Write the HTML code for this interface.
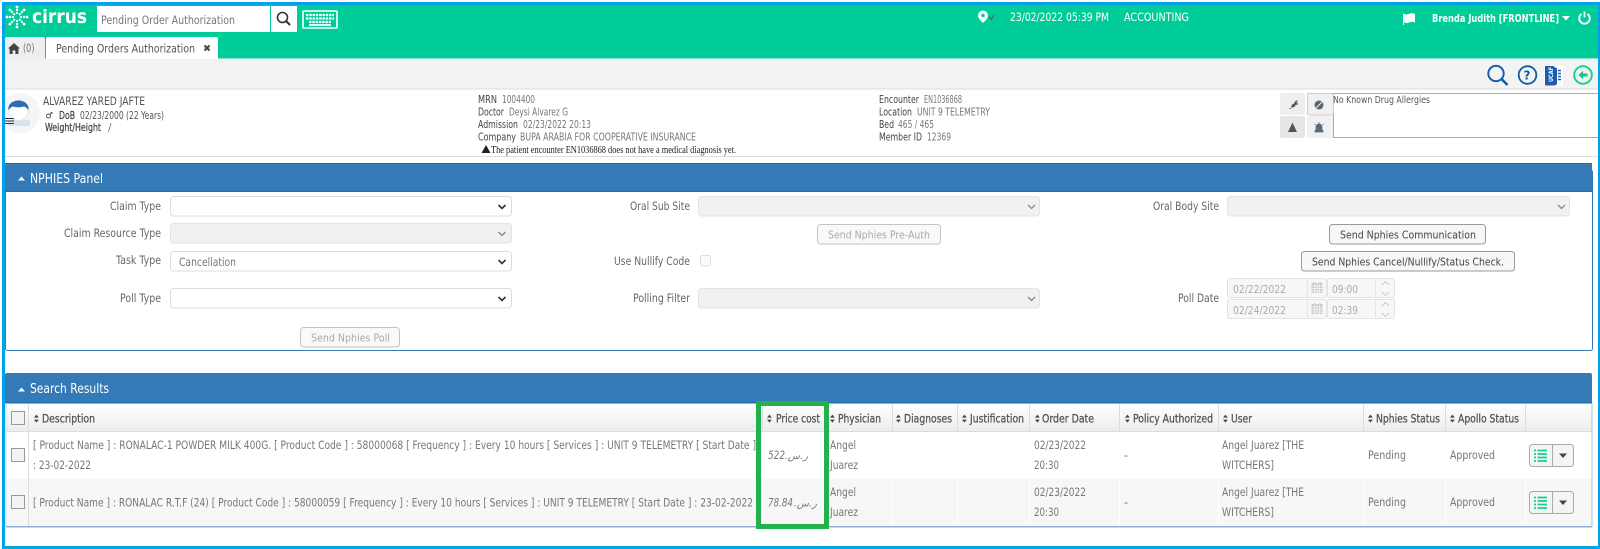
<!DOCTYPE html>
<html lang="en">
<head>
<meta charset="utf-8">
<title>Pending Orders Authorization</title>
<style>
html,body{margin:0;padding:0;background:#fff;width:1600px;height:549px;overflow:hidden}
svg{display:block}
text{font-family:"DejaVu Sans","Liberation Sans",sans-serif;font-size:11.5px;fill:#777;white-space:pre}
.h{fill:#555;font-size:11.5px;stroke:#555;stroke-width:.3}
.l{fill:#666;font-size:11.5px}
.d{fill:#444;font-size:10.5px}
.v{fill:#777;font-size:10.5px}
.w{fill:#fff;font-size:11.5px}
.t{fill:#fff;font-size:13px}
.b{fill:#444;font-size:11px}
.bd{fill:#aaa;font-size:11px}
.c{fill:#777;font-size:11.5px}
.i{fill:#aaa;font-size:11px}
.sel{fill:#fff;stroke:#ddd;stroke-width:1}
.dis{fill:#f1f1f1;stroke:#e4e4e4;stroke-width:1}
.btn{fill:#f7f7f7;stroke:#999;stroke-width:1}
.btd{fill:#f9f9f9;stroke:#c4c4c4;stroke-width:1}
.chk{fill:#f3f3f3;stroke:#999;stroke-width:1}
.sep{stroke:#ddd;stroke-width:1}
.chev{fill:none;stroke:#333;stroke-width:1.6}
.chd{fill:none;stroke:#888;stroke-width:1.3}
.inp{fill:#f7f7f7;stroke:#e4e4e4;stroke-width:1}
</style>
</head>
<body>
<svg xmlns="http://www.w3.org/2000/svg" width="1600" height="549" viewBox="0 0 1600 549">
<defs>
<linearGradient id="hg" x1="0" y1="0" x2="0" y2="1"><stop offset="0" stop-color="#fff"/><stop offset="1" stop-color="#ececec"/></linearGradient>
<g id="spoke"><circle cx="4" cy="0" r="1.1" fill="#fff"/><circle cx="7" cy="0" r="1.2" fill="#fff"/><circle cx="10" cy="0" r="1.4" fill="#fff"/></g>
<path id="sort" d="M0 3.6L2.4 0.6L4.8 3.6ZM0 5.6L2.4 8.6L4.8 5.6Z" fill="#444"/>
<g id="split">
<rect x="0.5" y="0.5" width="44" height="22" rx="3" fill="#f4f4f4" stroke="#aaa"/>
<line x1="23.5" y1="1" x2="23.5" y2="22" stroke="#aaa"/>
<path d="M5 6.500h2M5 10h2M5 13.500h2M5 17h2" stroke="#13d08f" stroke-width="1.800" fill="none"/>
<path d="M8.500 6.500h9.500M8.500 10h9.500M8.500 13.500h9.500M8.500 17h9.500" stroke="#13d08f" stroke-width="1.800" fill="none"/>
<path d="M30 9.500h8l-4 4.500Z" fill="#444"/>
</g>
<g id="cal"><rect x="0" y="1" width="11" height="10" fill="#ccc"/><path d="M0 4h11M0 6.500h11M0 9h11M3 1v10M5.500 1v10M8 1v10" stroke="#f7f7f7" stroke-width=".7"/><path d="M2.500 0v2M8.500 0v2" stroke="#bbb"/></g>
<g id="spin"><path d="M0 4L3.500 0.500L7 4M0 11L3.500 14.500L7 11" fill="none" stroke="#ccc" stroke-width="1.100"/></g>
</defs>

<rect width="1600" height="549" fill="#fff"/>

<!-- header -->
<rect x="5" y="5" width="1593" height="53.500" fill="#00cc99"/>
<g transform="translate(17,17)">
<use href="#spoke"/><use href="#spoke" transform="rotate(45)"/><use href="#spoke" transform="rotate(90)"/><use href="#spoke" transform="rotate(135)"/><use href="#spoke" transform="rotate(180)"/><use href="#spoke" transform="rotate(225)"/><use href="#spoke" transform="rotate(270)"/><use href="#spoke" transform="rotate(315)"/>
</g>
<text x="32" y="23" textLength="55" lengthAdjust="spacingAndGlyphs" style="font-size:19px;font-weight:bold;fill:#fff">cirrus</text>
<rect x="97" y="6" width="173" height="26" fill="#fff"/>
<rect x="271" y="6" width="26" height="26" fill="#fff"/>
<text x="101" y="24" textLength="134" lengthAdjust="spacingAndGlyphs" class="c">Pending Order Authorization</text>
<circle cx="282.500" cy="17.500" r="5" fill="none" stroke="#333" stroke-width="1.600"/>
<path d="M286 21L290 25" stroke="#333" stroke-width="2"/>
<rect x="303" y="11" width="34" height="17" rx="1" fill="none" stroke="#fff" stroke-width="1.600"/>
<path d="M306 15h28M306 18.500h28M309 22h22" stroke="#fff" stroke-width="2.200" stroke-dasharray="2.400 .9" fill="none"/>
<path d="M309 25h22" stroke="#fff" stroke-width="1.800" fill="none"/>

<!-- tabs -->
<path d="M5 59V39q0-2 2-2H43q2 0 2 2V59Z" fill="#eee"/>
<path d="M8 48.500L14 43L20 48.500H18.400V54H15.400V50.500H12.600V54H9.600V48.500Z" fill="#444"/>
<text x="23" y="52" textLength="11.500" lengthAdjust="spacingAndGlyphs" style="font-size:11.500px;fill:#777">(0)</text>
<path d="M46 59V39q0-2 2-2H216q2 0 2 2V59Z" fill="#fff"/>
<text x="56" y="52.500" textLength="139" lengthAdjust="spacingAndGlyphs" class="l" style="fill:#555">Pending Orders Authorization</text>
<path d="M204.500 45.500L209.500 50.500M209.500 45.500L204.500 50.500" stroke="#444" stroke-width="2"/>

<!-- top right -->
<path d="M983 23c-3-3-5-5-5-7.500a5 5 0 0 1 10 0c0 2.500-2 4.500-5 7.500Z" fill="#fff"/>
<circle cx="983" cy="15.500" r="1.800" fill="#00cc99"/>
<path d="M989 16.500l2.200 3 2.800-5" stroke="#7a5a4a" stroke-width="1.200" fill="none"/>
<text x="1010" y="21" textLength="99" lengthAdjust="spacingAndGlyphs" class="w">23/02/2022 05:39 PM</text>
<text x="1124" y="21" textLength="65" lengthAdjust="spacingAndGlyphs" class="w">ACCOUNTING</text>
<path d="M1403 13.500c3 1.200 4 1.200 6 .4s4-.8 6 0V22.500c-2-.8-4-.8-6 0s-3 .8-5-.2V25h-1Z" fill="#fff"/>
<text x="1432" y="22" textLength="127" lengthAdjust="spacingAndGlyphs" style="fill:#fff;font-size:11px;font-weight:bold">Brenda Judith [FRONTLINE]</text>
<path d="M1562 16h8l-4 4.500Z" fill="#fff"/>
<path d="M1581.500 14a5.300 5.300 0 1 0 6 0" fill="none" stroke="#fff" stroke-width="1.800"/>
<path d="M1584.500 11.500v6" stroke="#fff" stroke-width="1.800"/>

<!-- toolbar -->
<rect x="5" y="59" width="1593" height="30" fill="#f3f3f3"/>
<rect x="5" y="88.500" width="1593" height="1" fill="#ddd"/>
<circle cx="1496" cy="73.500" r="7.700" fill="none" stroke="#0d5ca5" stroke-width="1.900"/>
<path d="M1501.500 79L1507.500 85" stroke="#0d5ca5" stroke-width="2.600"/>
<circle cx="1527.500" cy="75" r="8.800" fill="none" stroke="#0d5ca5" stroke-width="1.800"/>
<text x="1523.500" y="79.500" style="font-size:12px;font-weight:bold;fill:#0d5ca5">?</text>
<rect x="1544" y="66" width="19" height="20" fill="#fff"/>
<path d="M1545 66h8l4 2.500V84l-2 1.500h-10Z" fill="#1a5cb0"/>
<path d="M1558 70.500h3M1558 73.500h3M1558 76.500h3M1558 79.500h3" stroke="#1a5cb0" stroke-width="1.500"/>
<text x="0" y="0" transform="translate(1553,82) rotate(-90)" textLength="15" lengthAdjust="spacingAndGlyphs" style="font-size:6px;font-weight:bold;fill:#fff">UCAF</text>
<circle cx="1583" cy="75" r="8.800" fill="none" stroke="#13d08f" stroke-width="1.900"/>
<path d="M1583 70.800L1578.500 75L1583 79.200V76.500H1587.500V73.500H1583Z" fill="#13c088"/>

<!-- patient -->
<circle cx="20" cy="113" r="20" fill="#f3f5f6"/>
<rect x="8" y="120" width="22" height="6" rx="2" fill="#d5e4f0"/>
<circle cx="18.500" cy="111" r="9.500" fill="#fff" stroke="#dbe6ef"/>
<path d="M8.500 110c-1-5.500 4-9.500 10-9.500S29.500 104.500 28.500 110c-2-2-3-3.500-5-3.500-3 1-7 1-10 0-2 0-3 1.500-5 3.500Z" fill="#2d6bb4"/>
<path d="M5 118.500h9M5 121h9M5 123.500h9" stroke="#333" stroke-width="1.100"/>
<text x="43" y="105" textLength="102" lengthAdjust="spacingAndGlyphs" style="font-size:11.500px;fill:#555">ALVAREZ YARED JAFTE</text>
<circle cx="48.500" cy="116" r="2" fill="none" stroke="#444" stroke-width=".9"/><path d="M50 114.500l2-2M50.500 112.500H52V114" stroke="#444" stroke-width=".8" fill="none"/>
<text x="59" y="119" textLength="16" lengthAdjust="spacingAndGlyphs" class="d" style="stroke:#444;stroke-width:.25">DoB</text>
<text x="80" y="119" textLength="84" lengthAdjust="spacingAndGlyphs" class="v" style="fill:#555">02/23/2000 (22 Years)</text>
<text x="45" y="131" textLength="56" lengthAdjust="spacingAndGlyphs" class="d" style="stroke:#444;stroke-width:.25">Weight/Height</text>
<text x="108" y="131" class="v">/</text>

<text x="478" y="103" textLength="19" lengthAdjust="spacingAndGlyphs" class="d">MRN</text>
<text x="502" y="103" textLength="33" lengthAdjust="spacingAndGlyphs" class="v">1004400</text>
<text x="478" y="115.500" textLength="26" lengthAdjust="spacingAndGlyphs" class="d">Doctor</text>
<text x="509" y="115.500" textLength="59" lengthAdjust="spacingAndGlyphs" class="v">Deysi Alvarez G</text>
<text x="478" y="128" textLength="40" lengthAdjust="spacingAndGlyphs" class="d">Admission</text>
<text x="523" y="128" textLength="68" lengthAdjust="spacingAndGlyphs" class="v">02/23/2022 20:13</text>
<text x="478" y="140.500" textLength="38" lengthAdjust="spacingAndGlyphs" class="d">Company</text>
<text x="520" y="140.500" textLength="176" lengthAdjust="spacingAndGlyphs" class="v">BUPA ARABIA FOR COOPERATIVE INSURANCE</text>
<path d="M486 145L490.500 153H481.500Z" fill="#222"/>
<text x="491" y="153" textLength="245" lengthAdjust="spacingAndGlyphs" style="font-family:'Liberation Serif',serif;font-size:10px;fill:#222">The patient encounter EN1036868 does not have a medical diagnosis yet.</text>

<text x="879" y="103" textLength="40" lengthAdjust="spacingAndGlyphs" class="d">Encounter</text>
<text x="924" y="103" textLength="38" lengthAdjust="spacingAndGlyphs" class="v">EN1036868</text>
<text x="879" y="115.500" textLength="33" lengthAdjust="spacingAndGlyphs" class="d">Location</text>
<text x="917" y="115.500" textLength="73" lengthAdjust="spacingAndGlyphs" class="v">UNIT 9 TELEMETRY</text>
<text x="879" y="128" textLength="15" lengthAdjust="spacingAndGlyphs" class="d">Bed</text>
<text x="898" y="128" textLength="36" lengthAdjust="spacingAndGlyphs" class="v">465 / 465</text>
<text x="879" y="140.500" textLength="43" lengthAdjust="spacingAndGlyphs" class="d">Member ID</text>
<text x="927" y="140.500" textLength="24" lengthAdjust="spacingAndGlyphs" class="v">12369</text>

<rect x="1280" y="93" width="25" height="22" rx="2" fill="#eeeef0"/>
<path d="M1289 109l2-1.500 1-3 2-1 1-2 3-1.500-1.500 3 2.500 1-3.500 1-1 2-3 .5-1 1.500Z" fill="#555"/>
<path d="M1307.500 93.500H1598M1333.500 93.500V137.500H1598" fill="none" stroke="#aaa"/>
<rect x="1307.500" y="93.500" width="26" height="21.500" rx="2" fill="#f1f1f3" stroke="#ccc"/>
<circle cx="1319" cy="105" r="4.500" fill="#5a6572"/><path d="M1316 108L1322 102" stroke="#f1f1f3" stroke-width="1"/>
<rect x="1280" y="116" width="25" height="22" rx="2" fill="#e6e6e8"/>
<path d="M1292.500 122.500L1297 132H1288Z" fill="#555"/>
<rect x="1307" y="116" width="26" height="22" rx="2" fill="#f1f1f3"/>
<path d="M1315 132h8v-1.500h-1V127a3 3 0 0 0-6 0v3.500h-1ZM1319 122v1.500M1314.500 124l1 1M1323.500 124l-1 1" fill="#5a6a7b" stroke="#5a6a7b" stroke-width=".8"/>
<text x="1333" y="103" textLength="97" lengthAdjust="spacingAndGlyphs" style="font-size:10px;fill:#555">No Known Drug Allergies</text>
<rect x="5" y="156" width="1593" height="1" fill="#ddd"/>

<!-- NPHIES panel -->
<rect x="5.500" y="170" width="1587" height="180.500" rx="2" fill="#fff" stroke="#337ab7"/>
<path d="M5 192V165q0-2 2-2H1590q2 0 2 2V192Z" fill="#337ab7"/>
<rect x="5" y="163" width="1587" height="1" fill="#1f6db0"/>
<rect x="5" y="191" width="1587" height="1" fill="#1f6db0"/>
<path d="M18 180.500L21.500 176.500L25 180.500Z" fill="#fff"/>
<text x="30" y="183" textLength="73" lengthAdjust="spacingAndGlyphs" class="t">NPHIES Panel</text>

<text x="110" y="210" textLength="51" lengthAdjust="spacingAndGlyphs" class="l">Claim Type</text>
<text x="64" y="237" textLength="97" lengthAdjust="spacingAndGlyphs" class="l">Claim Resource Type</text>
<text x="116" y="264" textLength="45" lengthAdjust="spacingAndGlyphs" class="l">Task Type</text>
<text x="120" y="302" textLength="41" lengthAdjust="spacingAndGlyphs" class="l">Poll Type</text>

<rect class="sel" x="170.500" y="196.500" width="341" height="19.500" rx="3"/>
<path class="chev" d="M498.500 205l3.500 3.500 3.500-3.500"/>
<rect class="dis" x="170.500" y="223.500" width="341" height="19.500" rx="3"/>
<path class="chd" d="M498.500 232l3.500 3.500 3.500-3.500"/>
<rect class="sel" x="170.500" y="251.500" width="341" height="19.500" rx="3"/>
<path class="chev" d="M498.500 260l3.500 3.500 3.500-3.500"/>
<text x="179" y="266" textLength="57" lengthAdjust="spacingAndGlyphs" class="c">Cancellation</text>
<rect class="sel" x="170.500" y="288.500" width="341" height="19.500" rx="3"/>
<path class="chev" d="M498.500 297l3.500 3.500 3.500-3.500"/>
<rect class="btd" x="300.500" y="327.500" width="99" height="19.500" rx="3"/>
<text x="311" y="341.500" textLength="79" lengthAdjust="spacingAndGlyphs" class="bd">Send Nphies Poll</text>

<text x="630" y="210" textLength="60" lengthAdjust="spacingAndGlyphs" class="l">Oral Sub Site</text>
<rect class="dis" x="698.500" y="196.500" width="341" height="19.500" rx="3"/>
<path class="chd" d="M1028 205l3.500 3.500 3.500-3.500"/>
<rect class="btd" x="817.500" y="224.500" width="123" height="19.500" rx="3"/>
<text x="828" y="238.500" textLength="102" lengthAdjust="spacingAndGlyphs" class="bd">Send Nphies Pre-Auth</text>
<text x="614" y="265" textLength="76" lengthAdjust="spacingAndGlyphs" class="l">Use Nullify Code</text>
<rect x="700.500" y="255.500" width="10" height="10.500" rx="2" fill="#fafafa" stroke="#ddd"/>
<text x="633" y="302" textLength="57" lengthAdjust="spacingAndGlyphs" class="l">Polling Filter</text>
<rect class="dis" x="698.500" y="288.500" width="341" height="19.500" rx="3"/>
<path class="chd" d="M1028 297l3.500 3.500 3.500-3.500"/>

<text x="1153" y="210" textLength="66" lengthAdjust="spacingAndGlyphs" class="l">Oral Body Site</text>
<rect class="dis" x="1227.500" y="196.500" width="342" height="19.500" rx="3"/>
<path class="chd" d="M1558 205l3.500 3.500 3.500-3.500"/>
<rect class="btn" x="1329.500" y="224.500" width="156" height="19.500" rx="3"/>
<text x="1340" y="238.500" textLength="136" lengthAdjust="spacingAndGlyphs" class="b">Send Nphies Communication</text>
<rect class="btn" x="1301.500" y="251.500" width="213" height="19.500" rx="3"/>
<text x="1312" y="265.500" textLength="192" lengthAdjust="spacingAndGlyphs" class="b">Send Nphies Cancel/Nullify/Status Check.</text>

<text x="1178" y="302" textLength="41" lengthAdjust="spacingAndGlyphs" class="l">Poll Date</text>
<rect class="inp" x="1227.500" y="278.500" width="99" height="19" rx="2"/>
<path d="M1307.500 279v18" stroke="#e4e4e4"/>
<rect class="inp" x="1327.500" y="278.500" width="67" height="19" rx="2"/>
<path d="M1375.500 279v18" stroke="#e4e4e4"/>
<rect class="inp" x="1227.500" y="299.500" width="99" height="19" rx="2"/>
<path d="M1307.500 300v18" stroke="#e4e4e4"/>
<rect class="inp" x="1327.500" y="299.500" width="67" height="19" rx="2"/>
<path d="M1375.500 300v18" stroke="#e4e4e4"/>
<text x="1233" y="293" textLength="53" lengthAdjust="spacingAndGlyphs" class="i">02/22/2022</text>
<text x="1233" y="314" textLength="53" lengthAdjust="spacingAndGlyphs" class="i">02/24/2022</text>
<text x="1332" y="293" textLength="26" lengthAdjust="spacingAndGlyphs" class="i">09:00</text>
<text x="1332" y="314" textLength="26" lengthAdjust="spacingAndGlyphs" class="i">02:39</text>
<use href="#cal" x="1311.500" y="282"/>
<use href="#cal" x="1311.500" y="303"/>
<use href="#spin" x="1382" y="281"/>
<use href="#spin" x="1382" y="302"/>

<!-- Search results -->
<path d="M5 403V375q0-2 2-2H1590q2 0 2 2V403Z" fill="#337ab7"/>
<rect x="5" y="402" width="1587" height="1.500" fill="#1f6db0"/>
<path d="M18 391.500L21.500 387.500L25 391.500Z" fill="#fff"/>
<text x="30" y="393" textLength="79" lengthAdjust="spacingAndGlyphs" class="t">Search Results</text>

<rect x="6" y="404" width="1586" height="28" fill="url(#hg)"/>
<rect x="6" y="431.500" width="1586" height="1" fill="#ccc"/>
<rect x="6" y="432" width="1586" height="47" fill="#fff"/>
<rect x="6" y="479" width="1586" height="47" fill="#f7f7f7"/>
<rect x="6" y="526" width="1586" height="1.500" fill="#8fb0cf"/>
<rect x="5.500" y="403" width="1" height="124" fill="#c3d3e2"/>
<rect x="1591.500" y="403" width="1" height="124" fill="#a5bfd8"/>
<g class="sep">
<path d="M28.500 404v122M762.500 404v28M828.500 404v28M892.500 404v28M957.500 404v28M1029.500 404v28M1119.500 404v28M1218.500 404v28M1363.500 404v28M1445.500 404v28M1525.500 404v28"/>
</g>
<path d="M892.500 479v47M957.500 479v47M1029.500 479v47M1119.500 479v47M1218.500 479v47M1363.500 479v47M1445.500 479v47M1525.500 479v47M762.500 479v47M828.500 479v47" stroke="#fff"/>

<rect class="chk" x="11.500" y="411.500" width="13" height="13"/>
<rect class="chk" x="11.500" y="448.500" width="13" height="13"/>
<rect class="chk" x="11.500" y="495.500" width="13" height="13"/>

<use href="#sort" x="34" y="414"/><text x="42" y="422.500" textLength="53" lengthAdjust="spacingAndGlyphs" class="h">Description</text>
<use href="#sort" x="767" y="414"/><text x="776" y="422.500" textLength="44" lengthAdjust="spacingAndGlyphs" class="h">Price cost</text>
<use href="#sort" x="830" y="414"/><text x="838" y="422.500" textLength="43" lengthAdjust="spacingAndGlyphs" class="h">Physician</text>
<use href="#sort" x="896" y="414"/><text x="904" y="422.500" textLength="48" lengthAdjust="spacingAndGlyphs" class="h">Diagnoses</text>
<use href="#sort" x="962" y="414"/><text x="970" y="422.500" textLength="54" lengthAdjust="spacingAndGlyphs" class="h">Justification</text>
<use href="#sort" x="1035" y="414"/><text x="1042" y="422.500" textLength="52" lengthAdjust="spacingAndGlyphs" class="h">Order Date</text>
<use href="#sort" x="1125" y="414"/><text x="1133" y="422.500" textLength="80" lengthAdjust="spacingAndGlyphs" class="h">Policy Authorized</text>
<use href="#sort" x="1223" y="414"/><text x="1231" y="422.500" textLength="21" lengthAdjust="spacingAndGlyphs" class="h">User</text>
<use href="#sort" x="1368" y="414"/><text x="1376" y="422.500" textLength="64" lengthAdjust="spacingAndGlyphs" class="h">Nphies Status</text>
<use href="#sort" x="1450" y="414"/><text x="1458" y="422.500" textLength="61" lengthAdjust="spacingAndGlyphs" class="h">Apollo Status</text>

<text x="33" y="449" textLength="723" lengthAdjust="spacingAndGlyphs" class="c">[ Product Name ] : RONALAC-1 POWDER MILK 400G. [ Product Code ] : 58000068 [ Frequency ] : Every 10 hours [ Services ] : UNIT 9 TELEMETRY [ Start Date ]</text>
<text x="33" y="469" textLength="58" lengthAdjust="spacingAndGlyphs" class="c">: 23-02-2022</text>
<text x="33" y="506.500" textLength="720" lengthAdjust="spacingAndGlyphs" class="c">[ Product Name ] : RONALAC R.T.F (24) [ Product Code ] : 58000059 [ Frequency ] : Every 10 hours [ Services ] : UNIT 9 TELEMETRY [ Start Date ] : 23-02-2022</text>

<text x="768" y="459" textLength="17" lengthAdjust="spacingAndGlyphs" class="c" style="font-style:italic">522</text>
<text x="808" y="459" direction="rtl" text-anchor="start" style="font-size:10px;font-style:italic;fill:#777">ر.س.</text>
<text x="768" y="506.500" textLength="25" lengthAdjust="spacingAndGlyphs" class="c" style="font-style:italic">78.84</text>
<text x="817" y="506.500" direction="rtl" text-anchor="start" style="font-size:10px;font-style:italic;fill:#777">ر.س.</text>

<text x="830" y="449" textLength="26" lengthAdjust="spacingAndGlyphs" class="c">Angel</text>
<text x="830" y="469" textLength="28" lengthAdjust="spacingAndGlyphs" class="c">Juarez</text>
<text x="830" y="496" textLength="26" lengthAdjust="spacingAndGlyphs" class="c">Angel</text>
<text x="830" y="516" textLength="28" lengthAdjust="spacingAndGlyphs" class="c">Juarez</text>

<text x="1034" y="449" textLength="52" lengthAdjust="spacingAndGlyphs" class="c">02/23/2022</text>
<text x="1034" y="469" textLength="25" lengthAdjust="spacingAndGlyphs" class="c">20:30</text>
<text x="1034" y="496" textLength="52" lengthAdjust="spacingAndGlyphs" class="c">02/23/2022</text>
<text x="1034" y="516" textLength="25" lengthAdjust="spacingAndGlyphs" class="c">20:30</text>

<text x="1124" y="459" class="c">-</text>
<text x="1124" y="506" class="c">-</text>

<text x="1222" y="449" textLength="82" lengthAdjust="spacingAndGlyphs" class="c">Angel Juarez [THE</text>
<text x="1222" y="469" textLength="52" lengthAdjust="spacingAndGlyphs" class="c">WITCHERS]</text>
<text x="1222" y="496" textLength="82" lengthAdjust="spacingAndGlyphs" class="c">Angel Juarez [THE</text>
<text x="1222" y="516" textLength="52" lengthAdjust="spacingAndGlyphs" class="c">WITCHERS]</text>

<text x="1368" y="459" textLength="38" lengthAdjust="spacingAndGlyphs" class="c">Pending</text>
<text x="1368" y="506" textLength="38" lengthAdjust="spacingAndGlyphs" class="c">Pending</text>
<text x="1450" y="459" textLength="45" lengthAdjust="spacingAndGlyphs" class="c">Approved</text>
<text x="1450" y="506" textLength="45" lengthAdjust="spacingAndGlyphs" class="c">Approved</text>

<use href="#split" x="1529" y="444"/>
<use href="#split" x="1529" y="491"/>

<!-- green highlight -->
<rect x="758.500" y="403.500" width="68" height="123" fill="none" stroke="#22b14c" stroke-width="5"/>

<!-- outer blue frame -->
<rect x="2" y="2" width="1598" height="3" fill="#00a2e8"/>
<rect x="2" y="2" width="3" height="547" fill="#00a2e8"/>
<rect x="2" y="546" width="1598" height="3" fill="#00a2e8"/>
<rect x="1598" y="2" width="2" height="547" fill="#00a2e8"/>
</svg>
</body>
</html>
